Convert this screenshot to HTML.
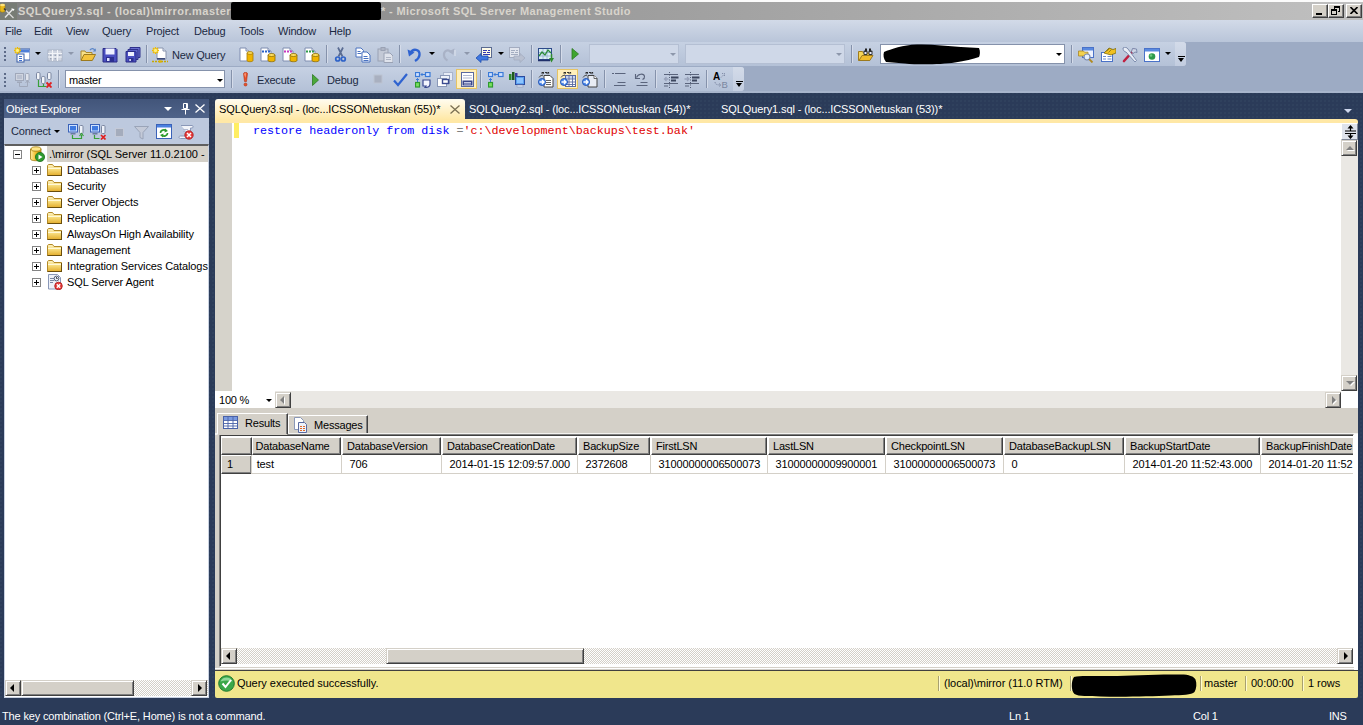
<!DOCTYPE html>
<html>
<head>
<meta charset="utf-8">
<title>SQLQuery3.sql - Microsoft SQL Server Management Studio</title>
<style>
html,body{margin:0;padding:0;}
body{width:1363px;height:725px;overflow:hidden;position:relative;background:#2b3b59 radial-gradient(circle at 1px 1px,#32435f 0.6px,transparent 1px) 0 0/4px 4px;font-family:"Liberation Sans",sans-serif;font-size:11px;color:#000;}
.abs{position:absolute;}
.t{position:absolute;white-space:nowrap;line-height:14px;font-size:11px;letter-spacing:-0.2px;}
/* title bar */
#topstrip{left:0;top:0;width:1363px;height:2px;background:#fbfbfb;}
#titlebar{left:0;top:2px;width:1363px;height:18px;background:linear-gradient(to right,#808080,#c0c0c0);}
#titlebar .t{color:#d8d4cc;font-weight:bold;top:2px;}
.wbtn{position:absolute;top:2px;width:16px;height:14px;background:#d4d0c8;box-sizing:border-box;border:1px solid;border-color:#fff #404040 #404040 #fff;box-shadow:inset -1px -1px 0 #808080;}
/* menu */
#menubar{left:0;top:20px;width:1363px;height:22px;background:linear-gradient(#d2dae8,#b9c5d9);}
#menubar .t{top:4px;color:#1b2942;}
/* toolbars */
#shelf{left:0;top:42px;width:1363px;height:50px;background:#9dabc4;}
#shelfline{left:0;top:91px;width:1363px;height:2px;background:#a8b5cc;}
.tb{position:absolute;background:linear-gradient(#c6d1e3,#b4c1d7);border-radius:0 3px 3px 0;}
.sep{position:absolute;width:1px;background:#8592ab;box-shadow:1px 0 0 #d5dcea;}
.grip{position:absolute;width:2px;height:16px;background:repeating-linear-gradient(#5d6b88 0 2px,transparent 2px 4px);}
.combo{position:absolute;box-sizing:border-box;background:#fff;border:1px solid #8592ab;}
.combo.dis{background:#cfd8e8;border-color:#b4bfd3;}
.darr{position:absolute;width:0;height:0;border-left:3px solid transparent;border-right:3px solid transparent;border-top:3px solid #000;}
.ic{position:absolute;width:16px;height:16px;}
.ovf{position:absolute;width:11px;background:linear-gradient(#d3dbe9,#c3cde0);border-radius:0 3px 3px 0;}
.ovg{position:absolute;width:7px;height:1px;background:#000;}
.ovg:after{content:"";position:absolute;left:0;top:2px;width:0;height:0;border-left:3.5px solid transparent;border-right:3.5px solid transparent;border-top:4px solid #000;}
.darr.g{border-top-color:#8d97ab;}
.tt{color:#1b2942;}
.hl{position:absolute;box-sizing:border-box;background:#ffefbb;border:1px solid #e5c365;}
/* panels */
#oe-title{left:4px;top:99px;width:205px;height:19px;background:linear-gradient(#42557a,#4f6389);}
#oe-title .t{color:#fff;top:3px;left:2px;}
#oe-tool{left:4px;top:118px;width:205px;height:26px;background:#bdc9de;}
#oe-tree{left:4px;top:144px;width:205px;height:554px;background:#fff;box-sizing:border-box;border:1px solid #c9d2e2;border-top:2px solid #5f5f5f;}
.row{position:absolute;left:0;height:16px;}
.exp{position:absolute;width:9px;height:9px;box-sizing:border-box;border:1px solid #848484;background:#fff;}
.exp:before{content:"";position:absolute;left:1px;top:3px;width:5px;height:1px;background:#000;}
.exp.plus:after{content:"";position:absolute;left:3px;top:1px;width:1px;height:5px;background:#000;}
/* classic scrollbar */
.sbtn{position:absolute;width:16px;height:16px;background:#d4d0c8;box-sizing:border-box;border:1px solid;border-color:#d4d0c8 #404040 #404040 #d4d0c8;box-shadow:inset 1px 1px 0 #fff, inset -1px -1px 0 #808080;}
.track{position:absolute;background-color:#eae8e3;background-image:conic-gradient(#fff 25%,#d4d0c8 0 50%,#fff 0 75%,#d4d0c8 0);background-size:2px 2px;}
.track.flat{background:#eae8e4;}
.arr-l{position:absolute;left:4px;top:3px;width:0;height:0;border-top:4px solid transparent;border-bottom:4px solid transparent;border-right:4px solid #000;}
.arr-r{position:absolute;left:6px;top:3px;width:0;height:0;border-top:4px solid transparent;border-bottom:4px solid transparent;border-left:4px solid #000;}
.arr-u{position:absolute;left:4px;top:5px;width:0;height:0;border-left:4px solid transparent;border-right:4px solid transparent;border-bottom:4px solid #000;}
.arr-d{position:absolute;left:4px;top:5px;width:0;height:0;border-left:4px solid transparent;border-right:4px solid transparent;border-top:4px solid #000;}
.dis .arr-l{border-right-color:#808080;filter:drop-shadow(1px 1px 0 #fff);}
.dis .arr-r{border-left-color:#808080;filter:drop-shadow(1px 1px 0 #fff);}
.dis .arr-u{border-bottom-color:#808080;filter:drop-shadow(1px 1px 0 #fff);}
.dis .arr-d{border-top-color:#808080;filter:drop-shadow(1px 1px 0 #fff);}
.darr.w{border-top-color:#fff;border-left-width:4px;border-right-width:4px;border-top-width:4px;}
#oe-tree{overflow:hidden;}
#oe-tree > *{margin-top:-1px;}
/* tabs */
#tab1{left:215px;top:99px;width:250px;height:20px;background:linear-gradient(#fffcf0,#ffe9a8);border-radius:3px 3px 0 0;}
.tabt{top:3px;}
.tl{letter-spacing:-0.11px;}
#tabline{left:215px;top:119px;width:1143px;height:4px;background:#ffe8a6;border-radius:0 3px 0 0;}
/* editor */
#editor{left:215px;top:123px;width:1143px;height:268px;background:#fff;}
#margin{left:0;top:0;width:17px;height:268px;background:#d6d3cb;}
#code{left:38px;top:1px;font-family:"Liberation Mono",monospace;font-size:11.7px;line-height:14px;white-space:pre;}
.kw{color:#0000ff;}.str{color:#e00000;}.op{color:#808080;}
.split{position:absolute;background:#dfe3ec;box-sizing:border-box;border:1px solid;border-color:#fff #808898 #808898 #fff;}
/* zoom bar */
#zoombar{left:215px;top:391px;width:1143px;height:17px;background:#fff;}
/* results */
#respane{left:215px;top:408px;width:1143px;height:263px;background:#d4d0c8;}
.rtab{position:absolute;box-sizing:border-box;background:#d4d0c8;border:1px solid;border-color:#fff #404040 transparent #fff;box-shadow:inset -1px 0 0 #808080;}
#grid{left:4px;top:26px;width:1135px;height:233px;background:#fff;box-sizing:border-box;border:1px solid;border-color:#808080 #fff #fff #808080;box-shadow:inset 1px 1px 0 #404040;overflow:hidden;}
.gh{position:absolute;top:2px;height:18px;background:#d4d0c8;box-sizing:border-box;border:1px solid;border-color:#fff #404040 #404040 #fff;box-shadow:inset -1px -1px 0 #808080;overflow:hidden;white-space:nowrap;line-height:16px;padding-left:4px;letter-spacing:-0.2px;}
.gh.rh{top:20px;height:19px;line-height:17px;padding-left:5px;}
.gc{position:absolute;top:20px;height:19px;box-sizing:border-box;border-left:1px solid #d4d0c8;border-bottom:1px solid #d4d0c8;overflow:hidden;white-space:nowrap;line-height:18px;padding-left:7.5px;letter-spacing:-0.13px;}
/* status */
#qstatus{left:215px;top:671px;width:1143px;height:27px;background:#f0e68c;border-radius:0 0 2px 2px;}
#qstatus .t{top:5px;letter-spacing:-0.03px;}
.qsep{position:absolute;top:5px;width:1px;height:15px;background:#a8a070;box-shadow:1px 0 0 #fffbd0;}
#status .t{color:#fff;top:709px;}
.blk{position:absolute;background:#000;}
</style>
</head>
<body>
<svg width="0" height="0" style="position:absolute"><defs>
<linearGradient id="gFold" x1="0" y1="0" x2="0" y2="1"><stop offset="0" stop-color="#fdf3c4"/><stop offset=".45" stop-color="#f7dc7c"/><stop offset="1" stop-color="#e3ad2c"/></linearGradient>
<linearGradient id="gCyl" x1="0" y1="0" x2="1" y2="0"><stop offset="0" stop-color="#ffe9a0"/><stop offset=".5" stop-color="#f2be2a"/><stop offset="1" stop-color="#c88e10"/></linearGradient>
</defs></svg>
<!-- TITLE BAR -->
<div class="abs" id="topstrip"></div>
<div class="abs" id="titlebar">
  <span class="t" style="left:18px;letter-spacing:0.47px">SQLQuery3.sql - (local)\mirror.master</span>
  <div class="blk" style="left:231px;top:0;width:150px;height:18px;border-radius:2px"></div>
  <span class="t" style="left:381px;letter-spacing:0.38px">* - Microsoft SQL Server Management Studio</span>
  <div class="wbtn" style="left:1312px"><div class="abs" style="left:3px;top:8px;width:6px;height:2px;background:#000"></div></div>
  <div class="wbtn" style="left:1328px"><svg style="position:absolute;left:2px;top:1px" width="10" height="10" viewBox="0 0 10 10" shape-rendering="crispEdges"><path d="M3 0h6v2H3zM3 2h1v2H3zM8 2h1v4H8zM7 5h2v1H7z" fill="#000"/><path d="M0 3h6v2H0zM0 5h1v4H0zM5 5h1v4H5zM0 8h6v1H0z" fill="#000"/></svg></div>
  <div class="wbtn" style="left:1346px"><svg style="position:absolute;left:3px;top:2px" width="8" height="7" viewBox="0 0 8 7"><path d="M0.500 0l7 7M7.500 0l-7 7" stroke="#000" stroke-width="1.600"/></svg></div>
  <svg style="position:absolute;left:0;top:1px" width="17" height="17" viewBox="0 0 17 17"><rect x="0" y="0" width="17" height="17" fill="#70786c" opacity=".55"/><path d="M0 2v6c0 1.600 5 1.600 5 0V2z" fill="#e8b818" stroke="#9a7a10" stroke-width=".6"/><ellipse cx="2.500" cy="2" rx="2.500" ry="1.200" fill="#ffe27a"/><path d="M5 14.500l8-8.500" stroke="#e8e8e8" stroke-width="1.400"/><path d="M5.500 7l8 8" stroke="#dcdcdc" stroke-width="1.300"/><path d="M11 5.500l2.500 2.500 1-2z" fill="#fff"/><path d="M4 5.500l2 2" stroke="#3a3a3a" stroke-width="1.600"/></svg>
</div>
<!-- MENU -->
<div class="abs" id="menubar">
  <span class="t" style="left:5px">File</span>
  <span class="t" style="left:34px">Edit</span>
  <span class="t" style="left:66px">View</span>
  <span class="t" style="left:102px">Query</span>
  <span class="t" style="left:146px">Project</span>
  <span class="t" style="left:194px">Debug</span>
  <span class="t" style="left:239px">Tools</span>
  <span class="t" style="left:278px">Window</span>
  <span class="t" style="left:329px">Help</span>
</div>
<!-- TOOLBARS -->
<div class="abs" id="shelf">
  <div class="tb" id="tb1" style="left:0;top:0;width:1186px;height:24px"></div>
  <div class="tb" id="tb2" style="left:0;top:25px;width:744px;height:24px"></div>
  <div class="ovf" style="left:1175px;top:0;height:24px"></div>
  <div class="ovf" style="left:733px;top:25px;height:24px"></div>
  <!-- toolbar 1 (coords relative to shelf: y = abs-42) -->
  <div class="grip" style="left:4px;top:5px"></div>
  <div class="darr" style="left:35px;top:10px"></div>
  <div class="darr g" style="left:68px;top:10px"></div>
  <div class="sep" style="left:146px;top:3px;height:18px"></div>
  <span class="t tt" style="left:172px;top:6px">New Query</span>
  <div class="sep" style="left:326px;top:3px;height:18px"></div>
  <div class="sep" style="left:399px;top:3px;height:18px"></div>
  <div class="darr" style="left:429px;top:10px"></div>
  <div class="darr g" style="left:464px;top:10px"></div>
  <div class="darr" style="left:498px;top:10px"></div>
  <div class="sep" style="left:531px;top:3px;height:18px"></div>
  <div class="sep" style="left:560px;top:3px;height:18px"></div>
  <div class="combo dis" style="left:589px;top:2px;width:90px;height:20px"><div class="darr g" style="left:80px;top:8px"></div></div>
  <div class="combo dis" style="left:685px;top:2px;width:160px;height:20px"><div class="darr g" style="left:150px;top:8px"></div></div>
  <div class="sep" style="left:851px;top:3px;height:18px"></div>
  <div class="combo" style="left:880px;top:2px;width:185px;height:20px"><div class="darr" style="left:175px;top:8px"></div>
    <svg style="position:absolute;left:2px;top:-1px" width="98" height="21" viewBox="0 0 98 21"><path d="M1 8C8 5 20 1 34 0.500c14-.500 30 1.500 44 2.500l18 1c1.500 3 1 7 0 9-6 2-14 4-24 5.500C58 20.500 36 21 22 19.500L3 18C0.500 15 0 11 1 8z" fill="#000"/></svg></div>
  <div class="sep" style="left:1071px;top:3px;height:18px"></div>
  <div class="darr" style="left:1165px;top:10px"></div>
  <div class="ovg" style="left:1178px;top:14px"></div>
  <!-- toolbar 2 (y = abs-42) -->
  <div class="grip" style="left:4px;top:31px"></div>
  <div class="sep" style="left:58px;top:28px;height:18px"></div>
  <div class="combo" style="left:65px;top:28px;width:160px;height:18px"><span class="t" style="left:3px;top:2px">master</span><div class="darr" style="left:151px;top:8px"></div></div>
  <div class="sep" style="left:231px;top:28px;height:18px"></div>
  <span class="t tt" style="left:257px;top:31px">Execute</span>
  <span class="t tt" style="left:327px;top:31px">Debug</span>
  <div class="hl" style="left:456px;top:27px;width:21px;height:20px"></div>
  <div class="sep" style="left:480px;top:28px;height:18px"></div>
  <div class="sep" style="left:531px;top:28px;height:18px"></div>
  <div class="hl" style="left:557px;top:27px;width:21px;height:20px"></div>
  <div class="sep" style="left:604px;top:28px;height:18px"></div>
  <div class="sep" style="left:655px;top:28px;height:18px"></div>
  <div class="sep" style="left:706px;top:28px;height:18px"></div>
  <div class="ovg" style="left:736px;top:39px"></div>
  <!-- icons toolbar 1 -->
  <svg class="ic" style="left:14px;top:5px" width="16" height="16" viewBox="0 0 16 16"><rect x="4" y="2" width="12" height="11" fill="#fff" stroke="#3a5fa8"/><rect x="4.5" y="2.5" width="11" height="3" fill="#4f7fd8"/><rect x="3" y="7" width="7" height="8" fill="#fff" stroke="#3b5ea6"/><path d="M5 9.5h3M5 11.5h3M5 13.5h3" stroke="#3f6fd0"/><path d="M3.5 0v7M0 3.5h7M1 1l5 5M6 1l-5 5" stroke="#f0bc00" stroke-width="1.3"/><circle cx="3.5" cy="3.5" r="1.7" fill="#fff07a"/></svg>
  <svg class="ic" style="left:47px;top:5px" width="16" height="16" viewBox="0 0 16 16"><rect x="1" y="3" width="14" height="11" fill="#d0d6e2" stroke="#aab3c5"/><path d="M1 6.5h14M1 10h14M5.5 3v11M10.5 3v11" stroke="#f2f4f8"/><rect x="3" y="7.5" width="1.5" height="1.5" fill="#9aa3b6"/><rect x="7.5" y="7.5" width="1.5" height="1.5" fill="#9aa3b6"/><rect x="12" y="7.5" width="1.5" height="1.5" fill="#9aa3b6"/><rect x="3" y="11" width="1.5" height="1.5" fill="#9aa3b6"/><rect x="7.5" y="11" width="1.5" height="1.5" fill="#9aa3b6"/></svg>
  <svg class="ic" style="left:80px;top:5px" width="16" height="16" viewBox="0 0 16 16"><path d="M1 13V4h4l1 1.5h6V8" fill="#f7e08a" stroke="#a8862a"/><path d="M1 13.5l3-6h11.5l-3.2 6z" fill="#f3c33d" stroke="#9c7a1e"/><path d="M10 3c1.5-2 4-2 5 0.5" fill="none" stroke="#5b86c8" stroke-width="1.3"/><path d="M15.8 1.2v3.2h-3z" fill="#5b86c8"/></svg>
  <svg class="ic" style="left:102px;top:5px" width="16" height="16" viewBox="0 0 16 16"><path d="M1 1.5h13l1 1V15H1z" fill="#4a4fc0" stroke="#2a2c86"/><rect x="3.5" y="1.5" width="9" height="6" fill="#eef0ff"/><rect x="4" y="10" width="8" height="5" fill="#2c2f90"/><rect x="5" y="11" width="2.5" height="3" fill="#dfe3ff"/></svg>
  <svg class="ic" style="left:125px;top:5px" width="16" height="16" viewBox="0 0 16 16"><path d="M5 0.5h10v10H5z" fill="#6a6fd0" stroke="#2f318c"/><path d="M3 2.5h10v10H3z" fill="#5b60c8" stroke="#2f318c"/><path d="M1 4.5h9.5l.5.5V15H1z" fill="#4a4fc0" stroke="#2a2c86"/><rect x="3" y="5" width="6" height="4" fill="#eef0ff"/><rect x="3.5" y="11" width="5" height="3.5" fill="#2c2f90"/><rect x="4.3" y="12" width="1.6" height="2" fill="#dfe3ff"/></svg>
  <svg class="ic" style="left:152px;top:5px" width="16" height="16" viewBox="0 0 16 16"><path d="M5 1h6l3 3v8H5z" fill="#fff" stroke="#8894ae"/><path d="M11 1v3h3" fill="#dfe5f2" stroke="#8894ae"/><path d="M3.5 0v7M0 3.5h7M1 1l5 5M6 1l-5 5" stroke="#f0bc00" stroke-width="1.3"/><circle cx="3.5" cy="3.5" r="1.7" fill="#fff07a"/><rect x="5" y="11" width="8" height="1.6" fill="#3c4a7a"/><path d="M0 14.5h16" stroke="#c8a800" stroke-width="1.4" stroke-dasharray="2 1"/><rect x="7" y="13.3" width="2.5" height="2.4" fill="#e0b400"/></svg>
  <svg class="ic" style="left:239px;top:5px" width="16" height="16" viewBox="0 0 16 16"><path d="M1 1h6l3 3v10H1z" fill="#fff" stroke="#7f8db0"/><path d="M7 1v3h3" fill="#dfe5f2" stroke="#7f8db0"/><path d="M8 6v7.5c0 1.6 6 1.6 6 0V6z" fill="#f0b400" stroke="#a87c00" stroke-width=".8"/><ellipse cx="11" cy="6" rx="3" ry="1.4" fill="#ffe060" stroke="#a87c00" stroke-width=".8"/></svg>
  <svg class="ic" style="left:260px;top:5px" width="16" height="16" viewBox="0 0 16 16"><path d="M1 1h7l3 3v10H1z" fill="#fff" stroke="#7f8db0"/><path d="M8 1v3h3" fill="#dfe5f2" stroke="#7f8db0"/><path d="M2 4.5h2M5 4.5h2M8 4.5h2" stroke="#2a62c8" stroke-width="2.2"/><path d="M8 8v5.5c0 1.6 7 1.6 7 0V8z" fill="#f0b400" stroke="#8a6a00" stroke-width=".8"/><ellipse cx="11.5" cy="8" rx="3.5" ry="1.5" fill="#ffe060" stroke="#8a6a00" stroke-width=".8"/></svg>
  <svg class="ic" style="left:282px;top:5px" width="16" height="16" viewBox="0 0 16 16"><path d="M1 1h7l3 3v10H1z" fill="#fff" stroke="#7f8db0"/><path d="M8 1v3h3" fill="#dfe5f2" stroke="#7f8db0"/><path d="M2 4.5h2M5 4.5h2M8 4.5h2" stroke="#c838c0" stroke-width="2.2"/><path d="M8 8v5.5c0 1.6 7 1.6 7 0V8z" fill="#f0b400" stroke="#8a6a00" stroke-width=".8"/><ellipse cx="11.5" cy="8" rx="3.5" ry="1.5" fill="#ffe060" stroke="#8a6a00" stroke-width=".8"/></svg>
  <svg class="ic" style="left:304px;top:5px" width="16" height="16" viewBox="0 0 16 16"><path d="M1 1h7l3 3v10H1z" fill="#fff" stroke="#7f8db0"/><path d="M8 1v3h3" fill="#dfe5f2" stroke="#7f8db0"/><path d="M2 4.5h2M5 4.5h2M8 4.5h2" stroke="#2e9a4a" stroke-width="2.2"/><path d="M8 8v5.5c0 1.6 7 1.6 7 0V8z" fill="#f0b400" stroke="#8a6a00" stroke-width=".8"/><ellipse cx="11.5" cy="8" rx="3.5" ry="1.5" fill="#ffe060" stroke="#8a6a00" stroke-width=".8"/></svg>
  <svg class="ic" style="left:333px;top:5px" width="16" height="16" viewBox="0 0 16 16"><path d="M5 0.5L9.5 9.5M10 0.5L5.5 9.5" stroke="#5a6c92" stroke-width="1.7" fill="none"/><circle cx="4.7" cy="12" r="2" fill="none" stroke="#2f63c8" stroke-width="1.7"/><circle cx="10.3" cy="12" r="2" fill="none" stroke="#2f63c8" stroke-width="1.7"/></svg>
  <svg class="ic" style="left:355px;top:5px" width="16" height="16" viewBox="0 0 16 16"><path d="M1 1h5l2.5 2.5V10H1z" fill="#fff" stroke="#4a72c0"/><path d="M2.5 4.5h3M2.5 6.5h4" stroke="#4a72c0"/><path d="M7 5h5l3 3v7H7z" fill="#fff" stroke="#4a72c0"/><path d="M8.5 9.5h4M8.5 11.5h5M8.5 13.5h5" stroke="#4a72c0"/></svg>
  <svg class="ic" style="left:377px;top:5px" width="16" height="16" viewBox="0 0 16 16"><rect x="1" y="2" width="10" height="12" fill="#c3c9d6" stroke="#9aa2b4"/><rect x="4" y="0.5" width="4" height="3" fill="#aeb5c5" stroke="#9aa2b4"/><path d="M7 6h6l3 3v6.5H7z" fill="#dfe3ec" stroke="#9aa2b4"/><path d="M9 10.5h5M9 12.5h5" stroke="#aeb5c5"/></svg>
  <svg class="ic" style="left:407px;top:5px" width="16" height="16" viewBox="0 0 16 16"><path d="M3.5 6C6 1 13 2 12.5 8c-.3 3-2 4.5-4.5 6" fill="none" stroke="#2f63d0" stroke-width="2.4"/><path d="M0.5 2.5l1.5 7 5.5-4z" fill="#2f63d0"/></svg>
  <svg class="ic" style="left:442px;top:5px" width="16" height="16" viewBox="0 0 16 16"><path d="M9 5C6 2 1.5 3.5 2 8.5c.3 2.5 1.5 4 3.5 5" fill="none" stroke="#a9b2c6" stroke-width="2.2"/><path d="M12.5 1.5l-1 6.5-5-3.5z" fill="#a9b2c6"/><path d="M13 3v6" stroke="#dfe4ee"/></svg>
  <svg class="ic" style="left:476px;top:5px" width="16" height="16" viewBox="0 0 16 16"><rect x="5.5" y="0.5" width="10" height="10" fill="#fffbe8" stroke="#5a6a90"/><path d="M7 3.5h4M12 3.5h2M7 5.5h3M11 5.5h3M7 7.5h7" stroke="#3038b0" stroke-width="1.2"/><path d="M0 11l5-4.5v2.5h7v4H5v2.5z" fill="#3f77e0" stroke="#1f4fb0" stroke-width=".8"/></svg>
  <svg class="ic" style="left:509px;top:5px" width="16" height="16" viewBox="0 0 16 16"><rect x="0.5" y="0.5" width="10" height="10" fill="#e1e5ee" stroke="#a3acc0"/><path d="M2 3.5h4M7 3.5h2M2 5.5h3M6 5.5h3M2 7.5h7" stroke="#a3acc0" stroke-width="1.2"/><path d="M16 11l-5-4.5v2.5H5v4h6v2.5z" fill="#b9c0d0" stroke="#a3acc0" stroke-width=".8"/></svg>
  <svg class="ic" style="left:538px;top:5px" width="16" height="16" viewBox="0 0 16 16"><rect x="0.5" y="1.5" width="13" height="11" fill="#d9ecf4" stroke="#2c4a8a"/><path d="M1 5.5h12M1 9h12M5 2v10M9 2v10" stroke="#8fb0d0" stroke-width=".8"/><path d="M1 9l3-4 3 3 3-5 3 3" fill="none" stroke="#2a8a3a" stroke-width="1.3"/><path d="M0 13.5h12" stroke="#1f2f6a" stroke-width="1.5"/><path d="M11 11h5l-2.5 4.5z" fill="#2e8a2e"/><path d="M13.5 7v5" stroke="#2e8a2e" stroke-width="1.5"/></svg>
  <svg class="ic" style="left:570px;top:5px" width="16" height="16" viewBox="0 0 16 16"><path d="M2 1.5l6.5 5.5-6.5 5.5z" fill="#3fa52f" stroke="#2d7a22" stroke-width=".8"/></svg>
  <svg class="ic" style="left:858px;top:5px" width="16" height="16" viewBox="0 0 16 16"><path d="M0.5 13.5v-9h4l1 1.5h6v7.5z" fill="#f5d45a" stroke="#a07c1c"/><path d="M1 13.5l3-5h11l-3.2 5z" fill="#f0bb2c" stroke="#9c7a1e"/><path d="M7 1.5h2v3H7zM11 1.5h2v3h-2z" fill="#222"/><rect x="5.5" y="3.5" width="4" height="4.5" rx="1" fill="#333"/><rect x="10.5" y="3.5" width="4" height="4.5" rx="1" fill="#333"/><rect x="6.5" y="5" width="2" height="2" fill="#e8ecff"/><rect x="11.5" y="5" width="2" height="2" fill="#e8ecff"/></svg>
  <svg class="ic" style="left:1078px;top:5px" width="16" height="16" viewBox="0 0 16 16"><rect x="4.5" y="0.5" width="11" height="10" fill="#eef3ff" stroke="#4a72c8"/><rect x="5" y="1" width="10" height="2.5" fill="#5a8ae0"/><path d="M0.5 4h5l1 1.2h3.5V9h-9.5z" fill="#f3d24e" stroke="#a8862a" stroke-width=".8"/><circle cx="9" cy="10" r="3" fill="#e4f0ff" stroke="#7a8ab0" stroke-width="1.2"/><path d="M11.2 12.2l3.3 3.3" stroke="#b08a20" stroke-width="1.8"/></svg>
  <svg class="ic" style="left:1100px;top:5px" width="16" height="16" viewBox="0 0 16 16"><rect x="1.5" y="5.5" width="11" height="9" fill="#fff" stroke="#4a72c8"/><path d="M3 9.5h3M7.5 9.5h4M3 12h3M7.5 12h4" stroke="#6a8ad0" stroke-width="1.2"/><path d="M4 6l5-5 4 1.5 3-1v4.5l-5 2z" fill="#f0c020" stroke="#7a6a10" stroke-width=".8"/><path d="M6.5 4.5l3-3M8.5 5.5l3-3" stroke="#7a6a10" stroke-width=".7"/></svg>
  <svg class="ic" style="left:1122px;top:5px" width="16" height="16" viewBox="0 0 16 16"><path d="M2 14L12 3" stroke="#c02040" stroke-width="2.6" stroke-linecap="round"/><path d="M1 1c2-1.5 4-.5 5 1l8.5 11.5-1.5 1.5L4 5C2.5 5 1 3.5 1 1z" fill="#e8edf6" stroke="#6a7aa0" stroke-width=".8"/><path d="M10.5 1.5l4 .5.5 3.5-2-.5-2 1.5-1.5-2z" fill="#cfd6e6" stroke="#6a7aa0" stroke-width=".8"/></svg>
  <svg class="ic" style="left:1144px;top:5px" width="16" height="16" viewBox="0 0 16 16"><rect x="0.5" y="1.5" width="15" height="13" fill="#fff" stroke="#4a72c8"/><rect x="1" y="2" width="14" height="2.5" fill="#5a8ae0"/><circle cx="8" cy="9.5" r="3.3" fill="#2e9a4a"/><circle cx="7" cy="8.5" r="1.3" fill="#6cc880"/></svg>
  <!-- icons toolbar 2 -->
  <svg class="ic" style="left:14px;top:30px" width="16" height="16" viewBox="0 0 16 16"><rect x="1.5" y="1.5" width="8" height="7" fill="#cfd4df" stroke="#a0a8ba"/><rect x="3" y="3" width="5" height="4" fill="#b9c0d0"/><rect x="3" y="9.5" width="5" height="1.5" fill="#a0a8ba"/><rect x="11.5" y="1.5" width="3.5" height="7" rx="1" fill="#dfe3ec" stroke="#a0a8ba"/><path d="M5.5 11v3.5h8V9" fill="none" stroke="#a0a8ba"/><path d="M11.5 11l2-2.5 2 2.5" fill="none" stroke="#a0a8ba"/></svg>
  <svg class="ic" style="left:36px;top:30px" width="16" height="16" viewBox="0 0 16 16"><rect x="0.5" y="0.5" width="3.5" height="7" rx="1.2" fill="#f4f6fa" stroke="#7a86a0"/><rect x="5.5" y="4.5" width="3.5" height="7" rx="1.2" fill="#f4f6fa" stroke="#7a86a0"/><rect x="11.5" y="0.5" width="3.5" height="7" rx="1.2" fill="#f4f6fa" stroke="#7a86a0"/><path d="M2.5 8v6.5h7.5M7.5 12v2.5" fill="none" stroke="#38a038" stroke-width="1.2"/><path d="M10.5 10.5l5 5M15.5 10.5l-5 5" stroke="#e02020" stroke-width="1.8"/></svg>
  <svg class="ic" style="left:238px;top:30px" width="16" height="16" viewBox="0 0 16 16"><path d="M5.5 1.5c0-1.5 4-1.5 4 0L8.5 9.5h-2z" fill="#e8502a" stroke="#b03010" stroke-width=".6"/><path d="M6.3 2c.3-.8 1.2-.8 1.5-.2L7.3 6z" fill="#ffb090"/><circle cx="7.5" cy="12.5" r="1.5" fill="#e8502a" stroke="#b03010" stroke-width=".6"/></svg>
  <svg class="ic" style="left:311px;top:30px" width="16" height="16" viewBox="0 0 16 16"><path d="M1.5 2.5l6 5.5-6 5.5z" fill="#4aa83a" stroke="#2d7a22" stroke-width=".8"/></svg>
  <svg class="ic" style="left:373px;top:30px" width="16" height="16" viewBox="0 0 16 16"><rect x="1" y="3" width="8" height="8" fill="#a9b0c0" stroke="#bcc3d2"/></svg>
  <svg class="ic" style="left:393px;top:30px" width="16" height="16" viewBox="0 0 16 16"><path d="M1 8.5l4 4.5L14 2" fill="none" stroke="#2f63d0" stroke-width="2.2"/></svg>
  <svg class="ic" style="left:415px;top:30px" width="16" height="16" viewBox="0 0 16 16"><rect x="0.5" y="0.5" width="4" height="4" fill="#cfe0ff" stroke="#3a7ad8" stroke-width="1.2"/><rect x="10.5" y="0.5" width="4.5" height="4" fill="#cfe0ff" stroke="#3a7ad8" stroke-width="1.2"/><path d="M10 2.5H6M7.5 1l-1.5 1.5 1.5 1.5" fill="none" stroke="#3a7ad8"/><path d="M2.5 10V6.5M1 8l1.5-1.5L4 8" fill="none" stroke="#3a7ad8"/><rect x="0.5" y="10.5" width="4" height="4.5" fill="#7ae060" stroke="#2e9a2e" stroke-width="1.2"/><path d="M8 8h7v4c0 2-2 3.5-5 3.5l1-1.5H8z" fill="#f4f6ff" stroke="#3a4a90" stroke-width="1.2"/></svg>
  <svg class="ic" style="left:437px;top:30px" width="16" height="16" viewBox="0 0 16 16"><rect x="6.5" y="0.5" width="9" height="8" fill="#e6ebf6" stroke="#a9b4cc"/><rect x="3.5" y="3.5" width="9" height="8" fill="#eef2fa" stroke="#8a98b8"/><rect x="0.5" y="6.5" width="9" height="8" fill="#fff" stroke="#8a98b8"/><rect x="5.5" y="7.5" width="6" height="4" fill="#fff" stroke="#3a4a90" stroke-width="1.4"/></svg>
  <svg class="ic" style="left:460.5px;top:30px" width="16" height="16" viewBox="0 0 16 16"><rect x="0.5" y="0.5" width="12" height="14" fill="#fff" stroke="#5a6aa0"/><path d="M2 3.5h9M2 6h9" stroke="#b0b8d0"/><rect x="1.5" y="8.5" width="10" height="5" fill="#3a4688"/><path d="M3 10.5h7M3 12h7" stroke="#e8ecff" stroke-width=".8"/></svg>
  <svg class="ic" style="left:488px;top:30px" width="16" height="16" viewBox="0 0 16 16"><rect x="0.5" y="0.5" width="4" height="4" fill="#cfe0ff" stroke="#3a7ad8" stroke-width="1.2"/><rect x="10.5" y="0.5" width="4.5" height="4" fill="#cfe0ff" stroke="#3a7ad8" stroke-width="1.2"/><path d="M10 2.5H6M7.5 1l-1.5 1.5 1.5 1.5" fill="none" stroke="#3a7ad8"/><path d="M2.5 10V6.5M1 8l1.5-1.5L4 8" fill="none" stroke="#3a7ad8"/><rect x="0.5" y="10.5" width="4" height="4.5" fill="#7ae060" stroke="#2e9a2e" stroke-width="1.2"/></svg>
  <svg class="ic" style="left:509px;top:30px" width="16" height="16" viewBox="0 0 16 16"><rect x="0" y="2" width="2.5" height="6" fill="#2e8a2e"/><rect x="3" y="0" width="2.5" height="8" fill="#205a20"/><rect x="6" y="1" width="2.5" height="7" fill="#3a3aa0"/><rect x="6.5" y="4.5" width="9" height="8" fill="#5aa0f0" stroke="#2a4aa0"/><rect x="8" y="6" width="6" height="5" fill="#8cc4ff"/><rect x="8" y="13" width="6" height="2" fill="#dfe5f2" stroke="#8a98b8" stroke-width=".6"/></svg>
  <svg class="ic" style="left:538px;top:30px" width="16" height="16" viewBox="0 0 16 16"><path d="M4 0.5h1M7 0.5h1M10 0.5h1M5.5 0v1.5M8.5 0v1.5" stroke="#222" stroke-width=".9"/><circle cx="4.5" cy="1" r=".9" fill="none" stroke="#222" stroke-width=".6"/><circle cx="10" cy="1" r=".9" fill="none" stroke="#222" stroke-width=".6"/><path d="M6 3.5h6l3 3v8.5H6z" fill="#fff" stroke="#444"/><path d="M8 8.5h5M8 10.5h5M8 12.5h5" stroke="#555" stroke-width=".9"/><circle cx="4" cy="10" r="3.6" fill="#4a86e8" stroke="#1f4fb0" stroke-width=".8"/><path d="M1.5 10h4M4 8l2 2-2 2" fill="none" stroke="#fff" stroke-width="1.3"/><path d="M1 5.5c1-2 3-2.5 4-2" fill="none" stroke="#444" stroke-width=".9"/></svg>
  <svg class="ic" style="left:560px;top:30px" width="16" height="16" viewBox="0 0 16 16"><path d="M4 0.5h1M7 0.5h1M10 0.5h1M5.5 0v1.5M8.5 0v1.5" stroke="#222" stroke-width=".9"/><circle cx="4.5" cy="1" r=".9" fill="none" stroke="#222" stroke-width=".6"/><circle cx="10" cy="1" r=".9" fill="none" stroke="#222" stroke-width=".6"/><rect x="5.5" y="3.5" width="10" height="11" fill="#fff" stroke="#5a6aa0"/><rect x="6" y="4" width="9" height="2.5" fill="#c8d4f0"/><path d="M5.5 7h10M5.5 10h10M5.5 12.5h10M9 3.5v11M12.5 3.5v11" stroke="#5a6aa0" stroke-width=".9"/><circle cx="4" cy="10" r="3.6" fill="#4a86e8" stroke="#1f4fb0" stroke-width=".8"/><path d="M1.5 10h4M4 8l2 2-2 2" fill="none" stroke="#fff" stroke-width="1.3"/><path d="M1 5.5c1-2 3-2.5 4-2" fill="none" stroke="#444" stroke-width=".9"/></svg>
  <svg class="ic" style="left:582px;top:30px" width="16" height="16" viewBox="0 0 16 16"><path d="M4 0.5h1M7 0.5h1M10 0.5h1M5.5 0v1.5M8.5 0v1.5" stroke="#222" stroke-width=".9"/><circle cx="4.5" cy="1" r=".9" fill="none" stroke="#222" stroke-width=".6"/><circle cx="10" cy="1" r=".9" fill="none" stroke="#222" stroke-width=".6"/><path d="M6 3.5h6l3 3v8.5H6z" fill="#e8ecf4" stroke="#444"/><path d="M12 3.5v3h3" fill="#fff" stroke="#444" stroke-width=".8"/><circle cx="4" cy="10" r="3.6" fill="#4a86e8" stroke="#1f4fb0" stroke-width=".8"/><path d="M1.5 10h4M4 8l2 2-2 2" fill="none" stroke="#fff" stroke-width="1.3"/><path d="M1 5.5c1-2 3-2.5 4-2" fill="none" stroke="#444" stroke-width=".9"/></svg>
  <svg class="ic" style="left:611px;top:30px" width="16" height="16" viewBox="0 0 16 16"><path d="M1 1.5h2M4 1.5h10.5M6.5 10.5h8M3 13.5h11.5" stroke="#5a647c" stroke-width="1.1"/></svg>
  <svg class="ic" style="left:633px;top:30px" width="16" height="16" viewBox="0 0 16 16"><path d="M3.5 5.5C5 1.5 11 1 11.5 4.5c.3 1.8-1 2.5-2 3" fill="none" stroke="#5a647c" stroke-width="1.1"/><path d="M2.5 2v4.5h4.5" fill="none" stroke="#5a647c" stroke-width="1.1"/><path d="M7.5 10.5h7M3.5 13.5h11" stroke="#5a647c" stroke-width="1.1"/></svg>
  <svg class="ic" style="left:663px;top:30px" width="16" height="16" viewBox="0 0 16 16"><path d="M1 2.5h14M1 11.5h14M1 14h4" stroke="#5a647c" stroke-width="1"/><path d="M8 5.5h7.5M8 8.5h5" stroke="#3c465e" stroke-width="1.8"/><path d="M6.5 0v16" stroke="#4a546c" stroke-width=".9" stroke-dasharray="1 1.5"/><path d="M5.5 7H1.5M3.5 5L1.5 7l2 2" fill="none" stroke="#98a2ba" stroke-width="1.3"/></svg>
  <svg class="ic" style="left:684px;top:30px" width="16" height="16" viewBox="0 0 16 16"><path d="M1 2.5h14M1 11.5h14M1 14h4" stroke="#5a647c" stroke-width="1"/><path d="M8 5.5h7.5M8 8.5h5" stroke="#3c465e" stroke-width="1.8"/><path d="M6.5 0v16" stroke="#4a546c" stroke-width=".9" stroke-dasharray="1 1.5"/><path d="M0.5 7H5M3 5l2 2-2 2" fill="none" stroke="#98a2ba" stroke-width="1.3"/></svg>
  <svg class="ic" style="left:713px;top:30px" width="16" height="16" viewBox="0 0 16 16"><text x="0" y="8" font-family="Liberation Sans,sans-serif" font-size="10" font-weight="bold" fill="#000">A</text><text x="8.5" y="15.5" font-family="Liberation Sans,sans-serif" font-size="9.5" fill="#7a86a0">B</text><path d="M8 5.5l3.5-3.5M9 1.5h2.5V4" fill="none" stroke="#7a86a0" stroke-width=".9" stroke-dasharray="1.2 .8"/><path d="M2 10c0 2 1.5 3 5.5 3M6 11.5l2 1.5-2 1.5" fill="none" stroke="#7a86a0" stroke-width=".9" stroke-dasharray="1.2 .8"/></svg>
  <!-- /icons -->
</div>
<div class="abs" id="shelfline"></div>
<!-- OBJECT EXPLORER -->
<div class="abs" id="oe-title"><span class="t" style="letter-spacing:-0.08px">Object Explorer</span>
  <div class="darr w" style="left:160px;top:8px"></div>
  <svg class="ic" style="left:177px;top:4px;width:9px;height:12px" width="9" height="12" viewBox="0 0 9 12"><path d="M2.500 0.500h4v5h-4zM5.500 0.500v5M0.500 6.500h8M4.500 7v4.500" fill="none" stroke="#fff" stroke-width="1"/></svg>
  <svg class="ic" style="left:191px;top:5px;width:10px;height:9px" width="10" height="9" viewBox="0 0 10 9"><path d="M0.500 0.500l9 8M9.500 0.500l-9 8" stroke="#fff" stroke-width="1.300"/></svg>
</div>
<div class="abs" id="oe-tool"><span class="t tt" style="left:7px;top:6px">Connect</span>
  <div class="darr" style="left:50px;top:12px"></div>
  <svg class="ic" style="left:64px;top:6px" width="16" height="16" viewBox="0 0 16 16"><rect x="0.5" y="0.5" width="9" height="7.5" fill="#cfe2ff" stroke="#3a62b8"/><rect x="2" y="2" width="6" height="4.5" fill="#3f7ae0"/><rect x="2.5" y="9" width="5" height="1.5" fill="#6a7aa0"/><rect x="11.5" y="1.5" width="3.5" height="8" rx="1" fill="#eef2fa" stroke="#7a86a0"/><path d="M4.5 11v3.5h9V11" fill="none" stroke="#38a038" stroke-width="1.2"/><path d="M11.5 12l2-2.5 2 2.5" fill="none" stroke="#38a038" stroke-width="1.2"/></svg>
  <svg class="ic" style="left:86px;top:6px" width="16" height="16" viewBox="0 0 16 16"><rect x="0.5" y="0.5" width="9" height="7.5" fill="#cfe2ff" stroke="#3a62b8"/><rect x="2" y="2" width="6" height="4.5" fill="#3f7ae0"/><rect x="2.5" y="9" width="5" height="1.5" fill="#6a7aa0"/><rect x="11.5" y="1.5" width="3.5" height="8" rx="1" fill="#eef2fa" stroke="#7a86a0"/><path d="M4.5 11v3.5h5" fill="none" stroke="#38a038" stroke-width="1.2"/><path d="M11 11l4.5 4.5M15.5 11L11 15.5" stroke="#e02020" stroke-width="1.7"/></svg>
  <svg class="ic" style="left:111px;top:10px" width="16" height="16" viewBox="0 0 16 16"><rect x="0.5" y="0.5" width="8" height="8" fill="#a4acbc" stroke="#c4cad8"/></svg>
  <svg class="ic" style="left:130px;top:7px" width="16" height="16" viewBox="0 0 16 16"><path d="M0.5 1.5h14l-5.5 6v6.5l-3-1.5V7.5z" fill="#c4cad8" stroke="#9aa4b8"/></svg>
  <svg class="ic" style="left:152px;top:6px" width="16" height="16" viewBox="0 0 16 16"><rect x="0.5" y="0.5" width="15" height="14" fill="#fff" stroke="#3a62b8"/><rect x="1" y="1" width="14" height="2.5" fill="#4a80e0"/><path d="M4.5 9c0-3 4-4 6-2M11.5 9c0 3-4 4-6 2" fill="none" stroke="#2e9a2e" stroke-width="1.6"/><path d="M9 4.5l3 2.5-3.5 1.5zM7 13.5L4 11l3.5-1.5z" fill="#2e9a2e"/></svg>
  <svg class="ic" style="left:174px;top:6px" width="16" height="16" viewBox="0 0 16 16"><path d="M3 1.5h11c1.5 0 1.5 2.5 0 2.5h-1.5v8H2.5c-2 0-2 2.5 0 2.5H11c1.5 0 1.5-2.5 1.5-2.5" fill="#f2f4fa" stroke="#8a98b8"/><path d="M5 5.5h5M5 7.5h5" stroke="#b0b8d0"/><circle cx="11" cy="11" r="4.2" fill="#e83a3a" stroke="#a81818" stroke-width=".8"/><path d="M9 9l4 4M13 9l-4 4" stroke="#fff" stroke-width="1.5"/></svg>
</div>
<div class="abs" id="oe-tree">
  <div class="abs" style="left:42px;top:1px;width:161px;height:16px;background:#d4d0c8"></div>
  <div class="exp" style="left:8px;top:5px"></div>
  <svg class="ic" style="left:25px;top:1px" width="16" height="16" viewBox="0 0 16 16"><path d="M0.500 3v10c0 2.300 10.500 2.300 10.500 0V3z" fill="url(#gCyl)" stroke="#a07a10" stroke-width=".8"/><ellipse cx="6" cy="3" rx="5" ry="2.2" fill="#ffe68a" stroke="#a07a10" stroke-width=".8"/><circle cx="10" cy="11" r="4.6" fill="#2e9a2e" stroke="#1f6f1f" stroke-width=".8"/><path d="M8.5 8.5l4 2.5-4 2.5z" fill="#fff"/></svg>
  <span class="t" style="left:44px;top:2px;letter-spacing:-0.03px">.\mirror (SQL Server 11.0.2100 -</span>
  <div class="exp plus" style="left:27px;top:21px"></div>
  <svg class="ic" style="left:42px;top:19px" width="16" height="16" viewBox="0 0 16 16"><path d="M0.5 11.5V2c0-.8.5-1.5 1.5-1.5h3.5L7 2.5h7.5v9z" fill="url(#gFold)" stroke="#b48a26"/><path d="M1 4.5h13" stroke="#fff8d8"/><path d="M0.5 11.5h14.5M14.5 3v8.5" stroke="#6a4e0c"/></svg>
  <span class="t" style="left:62px;top:18px;letter-spacing:-0.1px">Databases</span>
  <div class="exp plus" style="left:27px;top:37px"></div>
  <svg class="ic" style="left:42px;top:35px" width="16" height="16" viewBox="0 0 16 16"><path d="M0.5 11.5V2c0-.8.5-1.5 1.5-1.5h3.5L7 2.5h7.5v9z" fill="url(#gFold)" stroke="#b48a26"/><path d="M1 4.5h13" stroke="#fff8d8"/><path d="M0.5 11.5h14.5M14.5 3v8.5" stroke="#6a4e0c"/></svg>
  <span class="t" style="left:62px;top:34px;letter-spacing:-0.1px">Security</span>
  <div class="exp plus" style="left:27px;top:53px"></div>
  <svg class="ic" style="left:42px;top:51px" width="16" height="16" viewBox="0 0 16 16"><path d="M0.5 11.5V2c0-.8.5-1.5 1.5-1.5h3.5L7 2.5h7.5v9z" fill="url(#gFold)" stroke="#b48a26"/><path d="M1 4.5h13" stroke="#fff8d8"/><path d="M0.5 11.5h14.5M14.5 3v8.5" stroke="#6a4e0c"/></svg>
  <span class="t" style="left:62px;top:50px;letter-spacing:-0.1px">Server Objects</span>
  <div class="exp plus" style="left:27px;top:69px"></div>
  <svg class="ic" style="left:42px;top:67px" width="16" height="16" viewBox="0 0 16 16"><path d="M0.5 11.5V2c0-.8.5-1.5 1.5-1.5h3.5L7 2.5h7.5v9z" fill="url(#gFold)" stroke="#b48a26"/><path d="M1 4.5h13" stroke="#fff8d8"/><path d="M0.5 11.5h14.5M14.5 3v8.5" stroke="#6a4e0c"/></svg>
  <span class="t" style="left:62px;top:66px;letter-spacing:-0.1px">Replication</span>
  <div class="exp plus" style="left:27px;top:85px"></div>
  <svg class="ic" style="left:42px;top:83px" width="16" height="16" viewBox="0 0 16 16"><path d="M0.5 11.5V2c0-.8.5-1.5 1.5-1.5h3.5L7 2.5h7.5v9z" fill="url(#gFold)" stroke="#b48a26"/><path d="M1 4.5h13" stroke="#fff8d8"/><path d="M0.5 11.5h14.5M14.5 3v8.5" stroke="#6a4e0c"/></svg>
  <span class="t" style="left:62px;top:82px;letter-spacing:-0.1px">AlwaysOn High Availability</span>
  <div class="exp plus" style="left:27px;top:101px"></div>
  <svg class="ic" style="left:42px;top:99px" width="16" height="16" viewBox="0 0 16 16"><path d="M0.5 11.5V2c0-.8.5-1.5 1.5-1.5h3.5L7 2.5h7.5v9z" fill="url(#gFold)" stroke="#b48a26"/><path d="M1 4.5h13" stroke="#fff8d8"/><path d="M0.5 11.5h14.5M14.5 3v8.5" stroke="#6a4e0c"/></svg>
  <span class="t" style="left:62px;top:98px;letter-spacing:-0.1px">Management</span>
  <div class="exp plus" style="left:27px;top:117px"></div>
  <svg class="ic" style="left:42px;top:115px" width="16" height="16" viewBox="0 0 16 16"><path d="M0.5 11.5V2c0-.8.5-1.5 1.5-1.5h3.5L7 2.5h7.5v9z" fill="url(#gFold)" stroke="#b48a26"/><path d="M1 4.5h13" stroke="#fff8d8"/><path d="M0.5 11.5h14.5M14.5 3v8.5" stroke="#6a4e0c"/></svg>
  <span class="t" style="left:62px;top:114px;letter-spacing:-0.1px">Integration Services Catalogs</span>
  <div class="exp plus" style="left:27px;top:133px"></div>
  <svg class="ic" style="left:42px;top:129px" width="16" height="16" viewBox="0 0 16 16"><path d="M1.5 0.5h9l3 3v11.5h-12z" fill="#eef1f8" stroke="#8a98b8"/><path d="M3 4.5h6M3 6.5h4M3 8.5h3" stroke="#7a86a0"/><circle cx="9.5" cy="4.5" r="2.4" fill="#e6ecf8" stroke="#55607a"/><path d="M9.5 3v1.5h1.2" fill="none" stroke="#222" stroke-width=".8"/><circle cx="11.5" cy="12" r="3.8" fill="#e83a3a" stroke="#a81818" stroke-width=".8"/><path d="M9.8 10.3l3.4 3.4M13.2 10.3l-3.4 3.4" stroke="#fff" stroke-width="1.4"/></svg>
  <span class="t" style="left:62px;top:130px;letter-spacing:-0.1px">SQL Server Agent</span>
  <div class="track" style="left:0;top:535px;width:203px;height:16px"></div>
  <div class="sbtn" style="left:0;top:535px"><div class="arr-l"></div></div>
  <div class="sbtn" style="left:16px;top:535px;width:113px"></div>
  <div class="sbtn" style="left:186px;top:535px"><div class="arr-r"></div></div>
</div>
<!-- TABS -->
<div class="abs" id="tab1"><span class="t tabt tl" style="left:4px">SQLQuery3.sql - (loc...ICSSON\etuskan (55))*</span>
  <svg class="ic" style="left:235px;top:6px;width:10px;height:9px" width="10" height="9" viewBox="0 0 10 9"><path d="M0.500 0.500l9 8M9.500 0.500l-9 8" stroke="#7a6f52" stroke-width="1.300"/></svg>
</div>
<div class="darr" style="left:1344px;top:109px;border-left-width:4px;border-right-width:4px;border-top:4px solid #cfd8ee"></div>
<span class="t tl" style="left:469px;top:102px;color:#fff">SQLQuery2.sql - (loc...ICSSON\etuskan (54))*</span>
<span class="t tl" style="left:721px;top:102px;color:#fff">SQLQuery1.sql - (loc...ICSSON\etuskan (53))*</span>
<div class="abs" id="tabline"></div>
<!-- EDITOR -->
<div class="abs" id="editor">
  <div class="abs" id="margin"></div>
  <div class="abs" style="left:19px;top:0;width:5px;height:15px;background:#ffee62"></div>
  <div class="abs" id="code"><span class="kw">restore</span> <span class="kw">headeronly</span> <span class="kw">from</span> <span class="kw">disk</span> <span class="op">=</span><span class="str">'c:\development\backups\test.bak'</span></div>
  <div class="track flat" style="left:1126px;top:0;width:17px;height:268px"></div>
  <div class="split" style="left:1126px;top:0;width:17px;height:17px">
    <svg style="position:absolute;left:3px;top:1px" width="11" height="14" viewBox="0 0 11 14"><path d="M0 6h11M0 8.500h11" stroke="#000" stroke-width="1"/><path d="M5.500 1v5M5.500 8.500v4.500" stroke="#000" stroke-width="1.200"/><path d="M2.500 3.500l3-3.500 3 3.500zM2.500 10.500l3 3.500 3-3.500z" fill="#000"/></svg>
  </div>
  <div class="sbtn dis" style="left:1126px;top:17px;height:16px"><div class="arr-u"></div></div>
  <div class="sbtn dis" style="left:1126px;top:252px;height:16px"><div class="arr-d"></div></div>
</div>
<div class="abs" id="zoombar"><span class="t" style="left:4px;top:2px">100 %</span>
  <div class="darr" style="left:51px;top:8px"></div>
  <div class="track flat" style="left:60px;top:0;width:1066px;height:17px"></div>
  <div class="sbtn dis" style="left:60px;top:1px"><div class="arr-l"></div></div>
  <div class="sbtn dis" style="left:1110px;top:1px"><div class="arr-r"></div></div>
</div>
<!-- RESULTS -->
<div class="abs" id="respane">
  <div class="rtab" style="left:2px;top:5px;width:71px;height:22px;z-index:2"><span class="t" style="left:27px;top:2px">Results</span>
    <svg class="ic" style="left:5px;top:1px" width="16" height="16" viewBox="0 0 16 16"><rect x="0.500" y="1.500" width="14" height="12" fill="#fff" stroke="#4a62a8"/><rect x="1" y="2" width="13" height="3" fill="#7a9ae0"/><path d="M0.500 5.500h14M0.500 8.500h14M0.500 11h14M5 1.500v12M10 1.500v12" stroke="#4a62a8" stroke-width=".9"/></svg></div>
  <div class="rtab" style="left:73px;top:7px;width:80px;height:19px;border-bottom:none"><span class="t" style="left:25px;top:2px">Messages</span>
    <svg class="ic" style="left:4px;top:1px" width="16" height="16" viewBox="0 0 16 16"><path d="M1.500 0.500h6l3 3v9h-9z" fill="#fff" stroke="#8a98b8"/><path d="M5.500 5.500h6l2 2v8h-8z" fill="#eef2fa" stroke="#5a6aa0"/><path d="M7 9.500h2M10 9.500h2M7 11.500h2M10 11.500h2M7 13.500h2M10 13.500h2" stroke="#e06a2a"/></svg></div>
  <div class="abs" style="left:0;top:25px;width:1143px;height:2px;background:#f4f3f0"></div>
  <div class="abs" style="left:1139px;top:26px;width:4px;height:237px;background:#fff"></div>
  <div class="abs" style="left:0;top:260px;width:1143px;height:1px;background:#fff"></div>
  <div class="abs" style="left:0;top:262px;width:1143px;height:1px;background:#404040"></div>
  <div class="abs" id="grid">
    <div class="gh" style="left:1px;width:31px"></div>
    <div class="gh rh" style="left:1px;width:31px">1</div>
    <div class="gh" style="left:32px;width:89px;padding-left:2.5px">DatabaseName</div>
    <div class="gc" style="left:31px;width:90px;padding-left:4.7px">test</div>
    <div class="gh" style="left:122px;width:99px">DatabaseVersion</div>
    <div class="gc" style="left:121px;width:100px">706</div>
    <div class="gh" style="left:222px;width:135px">DatabaseCreationDate</div>
    <div class="gc" style="left:221px;width:136px">2014-01-15 12:09:57.000</div>
    <div class="gh" style="left:358px;width:72px">BackupSize</div>
    <div class="gc" style="left:357px;width:73px">2372608</div>
    <div class="gh" style="left:431px;width:116px">FirstLSN</div>
    <div class="gc" style="left:430px;width:117px">31000000006500073</div>
    <div class="gh" style="left:548px;width:117px">LastLSN</div>
    <div class="gc" style="left:547px;width:118px">31000000009900001</div>
    <div class="gh" style="left:666px;width:117px">CheckpointLSN</div>
    <div class="gc" style="left:665px;width:118px">31000000006500073</div>
    <div class="gh" style="left:784px;width:120px">DatabaseBackupLSN</div>
    <div class="gc" style="left:783px;width:121px">0</div>
    <div class="gh" style="left:905px;width:135px">BackupStartDate</div>
    <div class="gc" style="left:904px;width:136px">2014-01-20 11:52:43.000</div>
    <div class="gh" style="left:1041px;width:135px">BackupFinishDate</div>
    <div class="gc" style="left:1040px;width:136px">2014-01-20 11:52:43.000</div>
    <div class="track" style="left:1px;top:213px;width:1132px;height:16px"></div>
    <div class="sbtn" style="left:1px;top:213px"><div class="arr-l"></div></div>
    <div class="sbtn" style="left:166px;top:213px;width:198px"></div>
    <div class="sbtn" style="left:1117px;top:213px"><div class="arr-r"></div></div>
  </div>
</div>
<!-- QUERY STATUS -->
<div class="abs" id="qstatus">
  <svg class="ic" style="left:3px;top:4px;width:17px;height:17px" width="17" height="17" viewBox="0 0 17 17"><circle cx="8.500" cy="8.500" r="7.800" fill="#3aa84a" stroke="#1f7a2e"/><path d="M2.500 6.500a6.500 6.500 0 0 1 12 0c-4-1.500-8-1.500-12 0z" fill="#8fd89a"/><path d="M4.500 8.500l3 3.500 5.500-7" fill="none" stroke="#fff" stroke-width="2"/></svg>
  <span class="t" style="left:22px">Query executed successfully.</span>
  <div class="qsep" style="left:723px"></div>
  <span class="t" style="left:729px">(local)\mirror (11.0 RTM)</span>
  <div class="qsep" style="left:855px"></div>
  <svg style="position:absolute;left:856px;top:2px" width="126" height="24" viewBox="0 0 126 24"><path d="M3 4C10 2 24 3.500 40 3c20-.500 48-2 70-1.500 8 0 13 2 14.500 5 1.500 4 1 9-1 12.500-3 3-12 3-24 3.500-20 1-48 1.500-70 1-12-.500-22 0-26-2.500C0 18 0 8 3 4z" fill="#000"/></svg>
  <div class="qsep" style="left:985px"></div>
  <span class="t" style="left:989px">master</span>
  <div class="qsep" style="left:1030px"></div>
  <span class="t" style="left:1036px">00:00:00</span>
  <div class="qsep" style="left:1087px"></div>
  <span class="t" style="left:1093px">1 rows</span>
</div>
<!-- STATUS BAR -->
<div class="abs" style="left:0;top:698px;width:1363px;height:27px;background:#2b3b59"></div>
<div id="status">
  <span class="t" style="left:2px;letter-spacing:-0.15px">The key combination (Ctrl+E, Home) is not a command.</span>
  <span class="t" style="left:1009px">Ln 1</span>
  <span class="t" style="left:1193px">Col 1</span>
  <span class="t" style="left:1329px">INS</span>
</div>
</body>
</html>
